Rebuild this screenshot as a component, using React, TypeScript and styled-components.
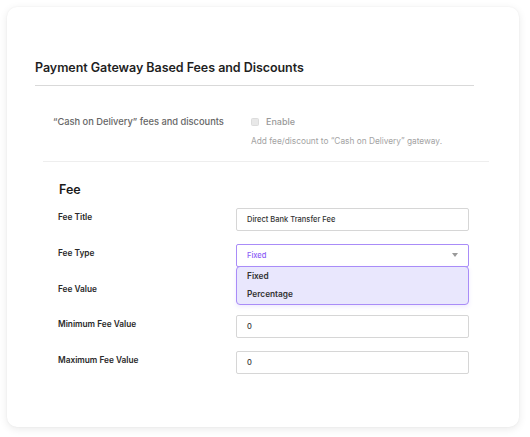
import React from "react";
import styled, { createGlobalStyle } from "styled-components";

const Global = createGlobalStyle`
  html, body { margin: 0; padding: 0; background: #ffffff; }
  body { font-family: Inter, "Noto Sans", sans-serif; -webkit-font-smoothing: antialiased; }
  * { box-sizing: border-box; }
`;

const Page = styled.div`
  padding: 7px 11px 10px 7px;
`;

const Card = styled.div`
  width: 512px;
  height: 420px;
  background: #fff;
  border-radius: 10px;
  box-shadow: 0 2px 8px rgba(0, 0, 0, 0.09), 0 0 2px rgba(0, 0, 0, 0.05);
  padding-top: 52px;
`;

const SectionTitle = styled.h2`
  margin: 0 45px 0 28px;
  padding-bottom: 8px;
  border-bottom: 1px solid #d9d9d9;
  font-size: 12.5px;
  font-weight: 600;
  color: #1f1f1f;
  line-height: 18px;
  letter-spacing: -0.05px;
`;

const GatewayRow = styled.div`
  display: flex;
  margin: 0 30px 0 36px;
  padding: 29px 0 13px 10px;
  border-bottom: 1px solid #eeeeee;
`;

const GatewayLabel = styled.div`
  width: 198px;
  font-size: 9.3px;
  font-weight: 500;
  color: #666;
  line-height: 14px;
`;

const GatewayControl = styled.div`
  display: flex;
  flex-direction: column;
  gap: 6px;
`;

const CheckLine = styled.label`
  display: flex;
  align-items: center;
  gap: 7px;
  font-size: 9px;
  font-weight: 500;
  color: #999;
  line-height: 14px;
`;

const Check = styled.span`
  width: 8px;
  height: 8px;
  border-radius: 1.5px;
  background: #e8e8e8;
  border: 1px solid #dcdcdc;
`;

const Help = styled.div`
  font-size: 8.3px;
  color: #a3a3a3;
  line-height: 13px;
`;

const FeeSection = styled.div`
  padding: 20px 50px 0 51px;
`;

const FeeHeading = styled.h3`
  margin: 0 0 10px 1px;
  font-size: 12.5px;
  font-weight: 600;
  color: #1a1a1a;
  line-height: 16px;
`;

const Rows = styled.div`
  display: flex;
  flex-direction: column;
  gap: 12.75px;
`;

const Row = styled.div`
  display: flex;
  align-items: flex-start;
  position: relative;
`;

const Label = styled.div`
  width: 178px;
  padding-top: 3px;
  font-size: 8.3px;
  font-weight: 600;
  color: #2a2a2a;
  line-height: 12px;
`;

const Field = styled.div<{ $active?: boolean }>`
  width: 233px;
  height: 23px;
  display: flex;
  align-items: center;
  justify-content: space-between;
  padding: 0 10px 0 10px;
  border: 1px solid ${(p) => (p.$active ? "#a98cf8" : "#d6d6d6")};
  border-radius: 2px;
  background: #fff;
  font-size: 7.5px;
  color: ${(p) => (p.$active ? "#8b5cf6" : "#333")};
  font-weight: 500;
  position: relative;
`;

const Caret = styled.span`
  width: 0;
  height: 0;
  border-left: 3.5px solid transparent;
  border-right: 3.5px solid transparent;
  border-top: 4px solid #9a9a9a;
`;

const Menu = styled.div`
  position: absolute;
  left: 178px;
  top: 22px;
  width: 233px;
  padding: 0;
  background: #e9e7fd;
  border: 1.5px solid #a98cf8;
  border-radius: 4px;
  box-shadow: 0 2px 4px rgba(120, 90, 240, 0.12);
  z-index: 2;
`;

const Option = styled.div`
  padding: 0 10px;
  height: 18.5px;
  line-height: 18.5px;
  font-size: 8.3px;
  font-weight: 600;
  color: #333;
`;

const fields = [
  { label: "Fee Title", value: "Direct Bank Transfer Fee" },
  { label: "Fee Type", value: "Fixed", select: true },
  { label: "Fee Value", value: "" },
  { label: "Minimum Fee Value", value: "0" },
  { label: "Maximum Fee Value", value: "0" },
];

export default function App() {
  return (
    <>
      <Global />
      <Page>
        <Card>
          <SectionTitle>Payment Gateway Based Fees and Discounts</SectionTitle>
          <GatewayRow>
            <GatewayLabel>“Cash on Delivery” fees and discounts</GatewayLabel>
            <GatewayControl>
              <CheckLine>
                <Check />
                Enable
              </CheckLine>
              <Help>Add fee/discount to “Cash on Delivery” gateway.</Help>
            </GatewayControl>
          </GatewayRow>
          <FeeSection>
            <FeeHeading>Fee</FeeHeading>
            <Rows>
              {fields.map((f) => (
                <Row key={f.label}>
                  <Label>{f.label}</Label>
                  <Field $active={f.select}>
                    <span>{f.value}</span>
                    {f.select && <Caret />}
                  </Field>
                  {f.select && (
                    <Menu>
                      <Option>Fixed</Option>
                      <Option>Percentage</Option>
                    </Menu>
                  )}
                </Row>
              ))}
            </Rows>
          </FeeSection>
        </Card>
      </Page>
    </>
  );
}
